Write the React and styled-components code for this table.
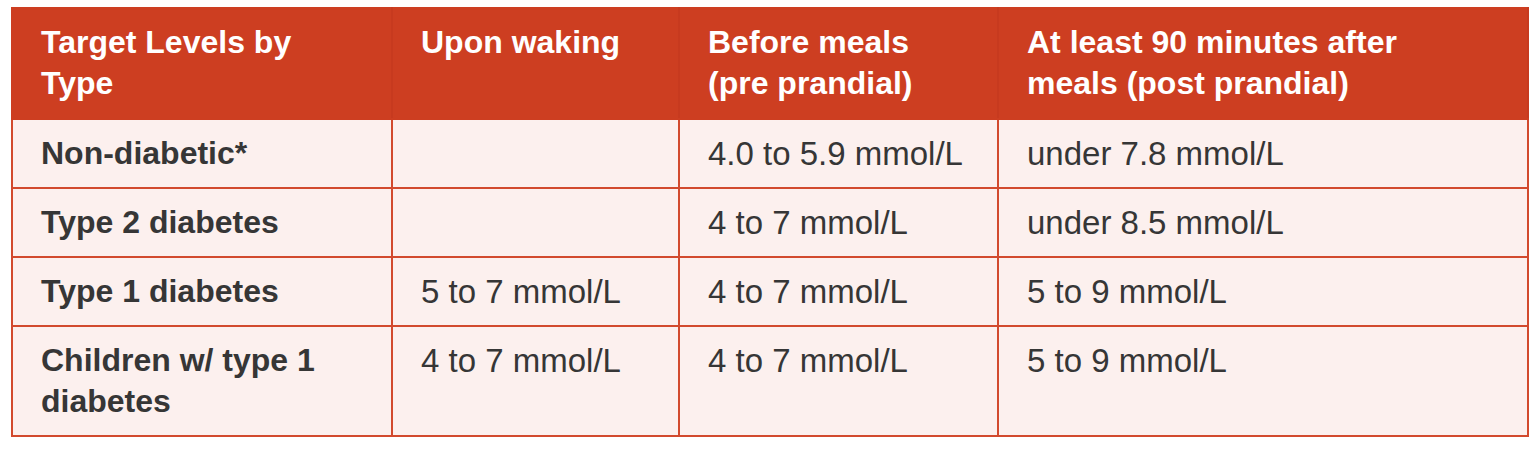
import React from 'react'
import styled, { createGlobalStyle } from 'styled-components'

const Global = createGlobalStyle`
  html, body { margin: 0; padding: 0; background: #fff; }
  body { font-family: "Liberation Sans", Arial, sans-serif; }
`;

const Wrap = styled.div`
  padding: 7px 9px 0 11px;
`;

const Table = styled.table`
  width: 1516px;
  border-collapse: collapse;
  table-layout: fixed;
  border: 2px solid #d24a2e;
`;

const HeadCell = styled.th`
  background: #cd3e21;
  color: #fff;
  font-weight: 700;
  font-size: 32px;
  line-height: 41px;
  text-align: left;
  vertical-align: top;
  padding: 13px ${p => p.$pr}px 14px 28px;
  border: 2px solid #cd3e21;
  border-right-color: #c73a1f;
`;

const Cell = styled.td`
  background: #fcf0ee;
  color: #363636;
  font-weight: ${p => (p.$label ? 700 : 400)};
  font-size: ${p => (p.$label ? 32 : 33)}px;
  line-height: 41px;
  vertical-align: top;
  padding: 13px 20px 13px 28px;
  border: 2px solid #d24a2e;
`;

const cols = [380, 287, 319, 530];

const head = [
  { text: 'Target Levels by Type', pr: 50 },
  { text: 'Upon waking', pr: 16 },
  { text: 'Before meals (pre prandial)', pr: 20 },
  { text: 'At least 90 minutes after meals (post prandial)', pr: 100 },
];

const rows = [
  ['Non-diabetic*', '', '4.0 to 5.9 mmol/L', 'under 7.8 mmol/L'],
  ['Type 2 diabetes', '', '4 to 7 mmol/L', 'under 8.5 mmol/L'],
  ['Type 1 diabetes', '5 to 7 mmol/L', '4 to 7 mmol/L', '5 to 9 mmol/L'],
  ['Children w/ type 1 diabetes', '4 to 7 mmol/L', '4 to 7 mmol/L', '5 to 9 mmol/L'],
];

export default function App() {
  return (
    <>
      <Global />
      <Wrap>
        <Table>
          <colgroup>
            {cols.map((w, i) => <col key={i} style={{ width: w }} />)}
          </colgroup>
          <thead>
            <tr>
              {head.map((h, i) => <HeadCell key={i} $pr={h.pr}>{h.text}</HeadCell>)}
            </tr>
          </thead>
          <tbody>
            {rows.map((r, i) => (
              <tr key={i}>
                {r.map((c, j) => <Cell key={j} $label={j === 0}>{c}</Cell>)}
              </tr>
            ))}
          </tbody>
        </Table>
      </Wrap>
    </>
  )
}
